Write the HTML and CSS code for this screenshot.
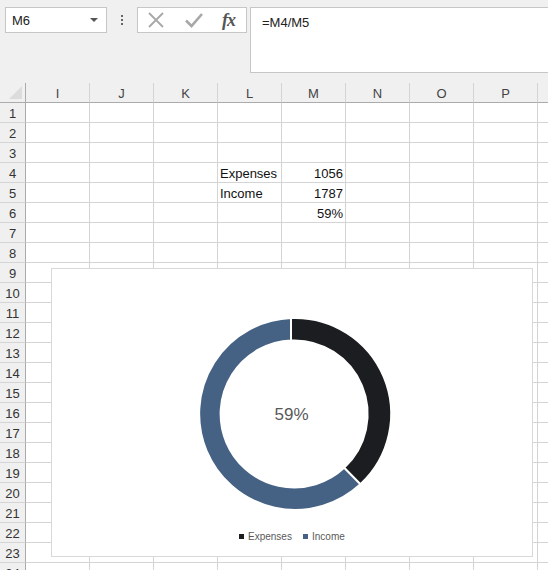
FILE: index.html
```html
<!DOCTYPE html>
<html>
<head>
<meta charset="utf-8">
<link rel="stylesheet" href="styles.css">
</head>
<body>
<div class="app">
  <div class="topbar">
    <div class="namebox">
      <span class="name">M6</span>
      <span class="caret"></span>
    </div>
    <div class="dots"><i></i><i></i><i></i></div>
    <div class="fxbox">
      <svg class="ico" width="20" height="20" viewBox="0 0 20 20"><path d="M3 3 L17 17 M17 3 L3 17" stroke="#a8a8a8" stroke-width="1.8" fill="none"/></svg>
      <svg class="ico" width="20" height="20" viewBox="0 0 20 20"><path d="M2 10.5 L7.5 16 L18 4" stroke="#a8a8a8" stroke-width="2.6" fill="none"/></svg>
      <span class="fx">fx</span>
    </div>
    <div class="formula">=M4/M5</div>
  </div>
  <div class="sheet">
    <div class="corner"><span class="tri"></span></div>
    <div class="ch">I</div><div class="ch">J</div><div class="ch">K</div><div class="ch">L</div><div class="ch">M</div><div class="ch">N</div><div class="ch">O</div><div class="ch">P</div><div class="ch last"></div>
  </div>
  <div class="chart">
    <svg width="480" height="287" viewBox="0 0 480 287">
      <path d="M239 49 A96 96 0 0 1 308.41 215.33 L292.14 198.78 A73.5 73.5 0 0 0 239 71.5 Z" fill="#1b1d20" stroke="#fff" stroke-width="2"/>
      <path d="M308.41 215.33 A96 96 0 1 1 239 49 L239 71.5 A73.5 73.5 0 1 0 292.14 198.78 Z" fill="#456184" stroke="#fff" stroke-width="2"/>
      <text x="239.5" y="151" class="center">59%</text>
      <rect x="187" y="265" width="5" height="5" fill="#1b1d20"/>
      <text x="196" y="271" class="leg">Expenses</text>
      <rect x="251" y="265" width="5" height="5" fill="#456184"/>
      <text x="260" y="271" class="leg">Income</text>
    </svg>
  </div>
</div>
<script>
(function(){
  var sheet=document.querySelector('.sheet');
  var data={4:{L:'Expenses',M:'1056'},5:{L:'Income',M:'1787'},6:{M:'59%'}};
  var cols=['I','J','K','L','M','N','O','P','Q'];
  for(var r=1;r<=24;r++){
    var rh=document.createElement('div');rh.className='rh';rh.textContent=r;sheet.appendChild(rh);
    cols.forEach(function(c){
      var d=document.createElement('div');d.className='cell'+(c==='Q'?' last':'');
      var v=data[r]&&data[r][c];
      if(v){d.textContent=v; if(c==='M')d.className+=' num';}
      sheet.appendChild(d);
    });
  }
})();
</script>
</body>
</html>
```
FILE: styles.css
```css
html,body{margin:0;padding:0;}
body{width:548px;height:570px;overflow:hidden;background:#f0f0f0;font-family:"Liberation Sans",Arial,sans-serif;}
.app{position:relative;width:548px;height:570px;overflow:hidden;}
.topbar{height:83px;box-sizing:border-box;padding-top:7px;display:flex;align-items:flex-start;}
.namebox{margin-left:5px;width:102px;height:26px;box-sizing:border-box;border:1px solid #c6c6c6;background:#fff;display:flex;align-items:center;justify-content:space-between;padding:0 8px 0 6px;}
.name{font-size:13px;color:#222;}
.caret{width:0;height:0;border-left:4px solid transparent;border-right:4px solid transparent;border-top:4px solid #555;}
.dots{width:30px;height:26px;display:flex;flex-direction:column;align-items:center;justify-content:center;gap:2px;}
.dots i{display:block;width:2px;height:2px;background:#666;}
.fxbox{width:110px;height:26px;box-sizing:border-box;border:1px solid #c6c6c6;background:#fff;display:flex;align-items:center;padding-left:8px;gap:18px;}
.fx{font-family:"Liberation Serif","Times New Roman",serif;font-style:italic;font-weight:bold;font-size:18px;color:#555;letter-spacing:-1px;}
.formula{margin-left:3px;flex:1;height:66px;box-sizing:border-box;border:1px solid #c6c6c6;border-right:none;background:#fff;font-size:13px;color:#222;padding:7px 0 0 11px;}
.sheet{display:grid;grid-template-columns:26px repeat(8,64px) 12px;grid-template-rows:20px;grid-auto-rows:20px;background:#fff;}
.corner{background:#f0f0f0;border-right:1px solid #ababab;border-bottom:1px solid #ababab;position:relative;}
.tri{position:absolute;right:3px;bottom:3px;width:0;height:0;border-left:13px solid transparent;border-bottom:13px solid #dcdcdc;}
.ch{background:#f0f0f0;border-right:1px solid #d4d4d4;border-bottom:1px solid #ababab;font-size:13px;color:#444;display:flex;align-items:center;justify-content:center;padding-top:1px;box-sizing:border-box;}
.ch.last{border-right:none;}
.rh{background:#f0f0f0;border-right:1px solid #ababab;border-bottom:1px solid #d4d4d4;font-size:13px;color:#333;display:flex;align-items:center;justify-content:center;padding-top:2px;box-sizing:border-box;}
.cell{border-right:1px solid #d4d4d4;border-bottom:1px solid #d4d4d4;font-size:13px;color:#111;padding:2px 2px 0 2px;line-height:17px;box-sizing:border-box;white-space:nowrap;}
.cell.num{text-align:right;}
.cell.last{border-right:none;}
.chart{position:absolute;left:51px;top:268px;width:482px;height:289px;box-sizing:border-box;border:1px solid #d9d9d9;background:#fff;}
.chart svg{display:block;}
.center{font-family:"Liberation Sans",Arial,sans-serif;font-size:17px;fill:#595959;text-anchor:middle;}
.leg{font-family:"Liberation Sans",Arial,sans-serif;font-size:10px;fill:#595959;}
```
